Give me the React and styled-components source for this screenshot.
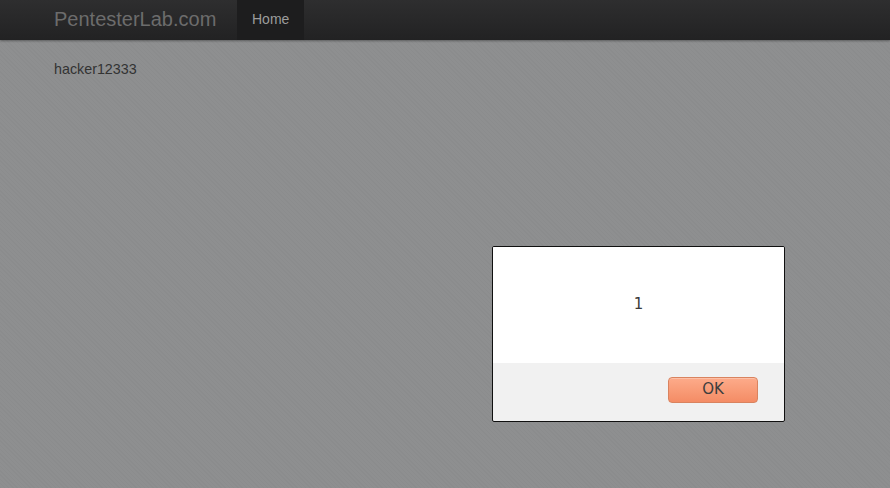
import styled, { createGlobalStyle } from "styled-components";

const Global = createGlobalStyle`
  html, body {
    margin: 0;
    padding: 0;
    height: 100%;
  }
  body {
    background: #8e8f90;
    font-family: "Liberation Sans", Arial, sans-serif;
  }
`;

const Page = styled.div`
  position: relative;
  width: 890px;
  height: 488px;
  overflow: hidden;
  background-color: #8e8f90;
  background-image: repeating-linear-gradient(
    45deg,
    rgba(0, 0, 0, 0.025) 0 1px,
    transparent 1px 3px
  );
`;

const Navbar = styled.div`
  height: 40px;
  display: flex;
  align-items: stretch;
  padding-left: 54px;
  background: linear-gradient(#2e2e2f, #222223);
  box-shadow: 0 1px 2px rgba(0, 0, 0, 0.35);
`;

const Brand = styled.div`
  font-size: 20px;
  color: #6c6c6c;
  display: flex;
  align-items: center;
  padding-bottom: 2px;
  width: 183px;
`;

const NavItem = styled.div`
  display: flex;
  align-items: center;
  padding: 0 15px;
  font-size: 14px;
  color: #9c9c9c;
  background: ${(p) => (p.active ? "#1d1d1e" : "transparent")};
  padding-bottom: 2px;
`;

const Content = styled.div`
  padding: 21px 54px;
  font-size: 14.3px;
  color: #333333;
`;

const Dialog = styled.div`
  position: absolute;
  left: 492px;
  top: 246px;
  width: 291px;
  height: 174px;
  border: 1px solid #101010;
  border-radius: 2px;
  background: #f1f1f1;
  display: flex;
  flex-direction: column;
  overflow: hidden;
`;

const Message = styled.div`
  height: 116px;
  background: #ffffff;
  display: flex;
  justify-content: center;
  align-items: center;
  padding: 0 0 2px 0;
  box-sizing: border-box;
  font-family: "DejaVu Sans", sans-serif;
  font-size: 15px;
  color: #3a3a3a;
`;

const Footer = styled.div`
  flex: 1;
  display: flex;
  justify-content: flex-end;
  align-items: flex-start;
  padding: 14px 26px 0 0;
`;

const Button = styled.button`
  width: 90px;
  height: 26px;
  border: 1px solid #d9835f;
  border-radius: 4px;
  background: linear-gradient(#fdab8a, #f48c65);
  font-family: "DejaVu Sans", sans-serif;
  font-size: 15px;
  color: #3e3e3e;
  padding: 0 0 2px;
  box-shadow: inset 0 1px 0 rgba(255, 255, 255, 0.25);
`;

export default function App() {
  return (
    <Page>
      <Global />
      <Navbar>
        <Brand>PentesterLab.com</Brand>
        <NavItem active>Home</NavItem>
      </Navbar>
      <Content>hacker12333</Content>
      <Dialog>
        <Message>1</Message>
        <Footer>
          <Button>OK</Button>
        </Footer>
      </Dialog>
    </Page>
  );
}
